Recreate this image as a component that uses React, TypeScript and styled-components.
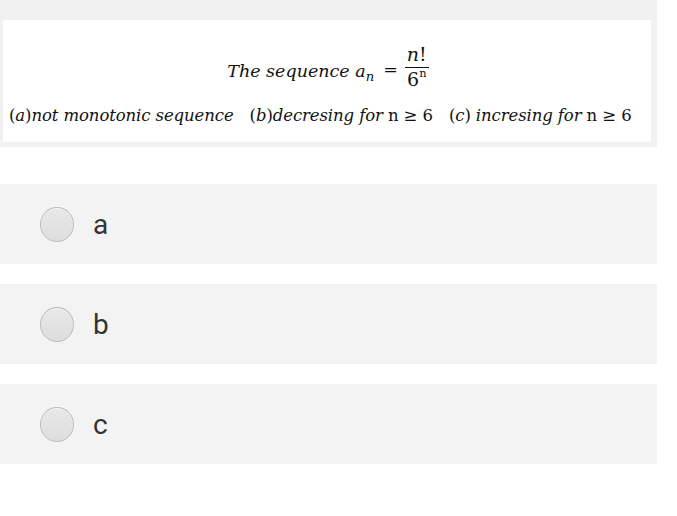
import styled, { createGlobalStyle } from "styled-components";

const GlobalStyle = createGlobalStyle`
  html, body {
    margin: 0;
    padding: 0;
    background: #ffffff;
  }
  body {
    font-family: Roboto, "Liberation Sans", sans-serif;
    color: #333333;
  }
`;

const Page = styled.div`
  width: 657px;
`;

const QuestionPanel = styled.section`
  background: #f1f1f1;
  padding: 20px 6px 5px 3px;
`;

const Figure = styled.div`
  background: #ffffff;
  height: 122px;
  box-sizing: border-box;
  padding: 25px 0 0 6px;
  display: flex;
  flex-direction: column;
  font-family: "DejaVu Serif", "Liberation Serif", serif;
  color: #111111;
`;

const Title = styled.div`
  display: flex;
  align-items: center;
  justify-content: center;
  font-size: 17.5px;
  height: 45px;
  padding-right: 4px;
`;

const Lead = styled.span`
  font-style: italic;
  margin-top: 6px;
`;

const It = styled.span`
  font-style: italic;
`;

const Up = styled.span`
  font-style: normal;
`;

const Sub = styled.sub`
  font-size: 0.75em;
  font-style: italic;
  vertical-align: -0.3em;
  line-height: 0;
`;

const Sup = styled.sup`
  font-size: 0.6em;
  vertical-align: 0.75em;
  line-height: 0;
`;

const Equals = styled.span`
  margin: 2px 7px 0 9px;
`;

const Fraction = styled.span`
  display: flex;
  flex-direction: column;
  align-items: center;
  font-size: 19px;
  line-height: 1.05;
`;

const Numerator = styled.span`
  padding: 0 2px 2px;
  border-bottom: 1px solid #111111;
`;

const Denominator = styled.span`
  padding-top: 2px;
`;

const Choices = styled.div`
  display: flex;
  font-size: 16.5px;
  margin-top: 16px;
  white-space: nowrap;
  letter-spacing: -0.1px;
`;

const Choice = styled.span`
  margin-right: ${(p: { gap?: number }) => p.gap ?? 0}px;
`;

const OptionList = styled.div`
  display: flex;
  flex-direction: column;
  gap: 20px;
  margin-top: 37px;
`;

const Option = styled.label`
  display: flex;
  align-items: center;
  gap: 19px;
  height: 80px;
  padding-left: 40px;
  background: #f3f3f3;
  font-size: 28px;
  color: #333333;
  cursor: pointer;
`;

const Radio = styled.span`
  width: 32px;
  height: 33px;
  border-radius: 50%;
  border: 1px solid #bcbcbc;
  background: linear-gradient(#e8e8e8, #dedede);
  box-shadow: inset 0 1px 0 #f4f4f4;
  flex-shrink: 0;
`;

const Label = styled.span`
  line-height: 1;
  margin-top: 2px;
`;

const options = ["a", "b", "c"];

export default function App() {
  return (
    <Page>
      <GlobalStyle />
      <QuestionPanel>
        <Figure>
          <Title>
            <Lead>
              The sequence a<Sub>n</Sub>
            </Lead>
            <Equals>=</Equals>
            <Fraction>
              <Numerator>
                <It>n</It>!
              </Numerator>
              <Denominator>
                6<Sup>n</Sup>
              </Denominator>
            </Fraction>
          </Title>
          <Choices>
            <Choice gap={16}>
              (<It>a</It>)<It>not monotonic sequence</It>
            </Choice>
            <Choice gap={16}>
              (<It>b</It>)<It>decresing for </It>
              <Up>n ≥ 6</Up>
            </Choice>
            <Choice>
              (<It>c</It>) <It>incresing for </It>
              <Up>n ≥ 6</Up>
            </Choice>
          </Choices>
        </Figure>
      </QuestionPanel>
      <OptionList>
        {options.map((o) => (
          <Option key={o}>
            <Radio />
            <Label>{o}</Label>
          </Option>
        ))}
      </OptionList>
    </Page>
  );
}
